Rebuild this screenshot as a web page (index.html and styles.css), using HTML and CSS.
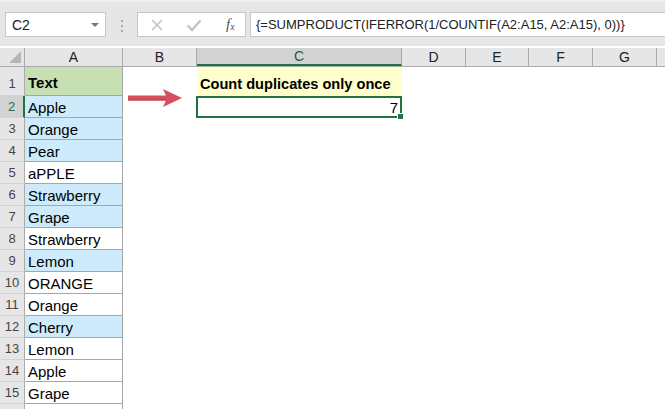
FILE: index.html
```html
<!DOCTYPE html>
<html>
<head>
    <title>Count duplicates only once</title>
    <link rel="stylesheet" href="styles.css">
</head>
<body>
    <div class="toolbar">
        <div class="name-box">
            <span>C2</span>
            <span class="drop"></span>
        </div>
        <div class="grip">
            <i></i><i></i><i></i>
        </div>
        <div class="fx-buttons">
            <svg width="14" height="14" viewBox="0 0 14 14"><path d="M2 2 L12 12 M12 2 L2 12" stroke="#c4c4c4" stroke-width="1.6" fill="none"/></svg>
            <svg width="16" height="14" viewBox="0 0 16 14"><path d="M1.5 7.5 L6 12 L14.5 2.5" stroke="#c4c4c4" stroke-width="2.4" fill="none"/></svg>
            <span class="fx">f<sub>x</sub></span>
        </div>
        <div class="formula">{=SUMPRODUCT(IFERROR(1/COUNTIF(A2:A15, A2:A15), 0))}</div>
    </div>

    <div class="sheet">
        <div class="row head">
            <div class="corner"><span></span></div>
            <div class="col-label">A</div>
            <div class="col-label">B</div>
            <div class="col-label active">C</div>
            <div class="col-label">D</div>
            <div class="col-label">E</div>
            <div class="col-label">F</div>
            <div class="col-label">G</div>
            <div class="col-label last"></div>
        </div>

        <div class="row first">
            <div class="num">1</div>
            <div class="cell green bold">Text</div>
            <div class="arrow-cell">
                <svg width="56" height="20" viewBox="0 0 56 20">
                    <path d="M1 7.5 H40 V12.5 H1 Z" fill="#d4505e"/>
                    <path d="M1 12 H40" stroke="#b13f4b" stroke-width="1.2"/>
                    <path d="M36 1 L55 10 L36 19 L40 10 Z" fill="#d4505e"/>
                </svg>
            </div>
            <div class="cell yellow bold">Count duplicates only once</div>
        </div>

        <div class="row">
            <div class="num active">2</div>
            <div class="cell blue">Apple</div>
            <div class="blank"></div>
            <div class="cell selected">7<span class="handle"></span></div>
        </div>
        <div class="row"><div class="num">3</div><div class="cell blue">Orange</div></div>
        <div class="row"><div class="num">4</div><div class="cell blue">Pear</div></div>
        <div class="row"><div class="num">5</div><div class="cell">aPPLE</div></div>
        <div class="row"><div class="num">6</div><div class="cell blue">Strawberry</div></div>
        <div class="row"><div class="num">7</div><div class="cell blue">Grape</div></div>
        <div class="row"><div class="num">8</div><div class="cell">Strawberry</div></div>
        <div class="row"><div class="num">9</div><div class="cell blue">Lemon</div></div>
        <div class="row"><div class="num">10</div><div class="cell">ORANGE</div></div>
        <div class="row"><div class="num">11</div><div class="cell">Orange</div></div>
        <div class="row"><div class="num">12</div><div class="cell blue">Cherry</div></div>
        <div class="row"><div class="num">13</div><div class="cell">Lemon</div></div>
        <div class="row"><div class="num">14</div><div class="cell">Apple</div></div>
        <div class="row"><div class="num">15</div><div class="cell">Grape</div></div>
        <div class="row"><div class="num"></div><div class="cell"></div></div>
    </div>
</body>
</html>
```

FILE: styles.css
```css
body {
    margin: 0;
    font-family: "Liberation Sans", Arial, sans-serif;
    background: #ffffff;
    overflow: hidden;
}

/* formula bar */
.toolbar {
    height: 46px;
    background: #e6e6e6;
    border-top: 2px solid #f0f0f0;
    box-sizing: border-box;
    display: flex;
    align-items: flex-start;
    padding-top: 10px;
    padding-left: 5px;
}
.name-box {
    width: 101px;
    height: 25px;
    box-sizing: border-box;
    background: #fff;
    border: 1px solid #c6c6c6;
    display: flex;
    align-items: center;
    justify-content: space-between;
    padding: 0 6px 0 6px;
    font-size: 14px;
    color: #222;
}
.drop {
    width: 0;
    height: 0;
    border-left: 4px solid transparent;
    border-right: 4px solid transparent;
    border-top: 4px solid #777;
}
.grip {
    width: 31px;
    display: flex;
    flex-direction: column;
    align-items: center;
    gap: 3px;
    padding-top: 8px;
}
.grip i {
    width: 2px;
    height: 2px;
    background: #a8a8a8;
}
.fx-buttons {
    width: 109px;
    height: 25px;
    box-sizing: border-box;
    background: #fff;
    border: 1px solid #c6c6c6;
    display: flex;
    align-items: center;
    padding-left: 12px;
    gap: 22px;
}
.fx {
    font-family: "Liberation Serif", serif;
    font-style: italic;
    font-size: 15px;
    color: #555;
    margin-left: 2px;
}
.fx sub {
    font-size: 10px;
    vertical-align: -1px;
}
.formula {
    flex: 1;
    height: 25px;
    margin-left: 4px;
    box-sizing: border-box;
    background: #fff;
    border: 1px solid #c6c6c6;
    border-right: none;
    padding-left: 5px;
    font-size: 13px;
    line-height: 23px;
    color: #222;
    white-space: nowrap;
}

/* grid */
.sheet {
    margin-top: 2px;
}
.row {
    display: grid;
    grid-template-columns: 25px 98px 74px 205px 64px 63px 64px 64px 1fr;
    grid-template-rows: minmax(0, 1fr);
    height: 22px;
}
.row.first {
    height: 29px;
}
.row.head {
    height: 19px;
    background: #e6e6e6;
    border-bottom: 1px solid #ababab;
    box-sizing: border-box;
}
.corner {
    border-right: 1px solid #ababab;
    position: relative;
}
.corner span {
    position: absolute;
    right: 3px;
    bottom: 3px;
    width: 0;
    height: 0;
    border-left: 12px solid transparent;
    border-bottom: 12px solid #b6b6b6;
}
.col-label {
    border-right: 1px solid #ababab;
    text-align: center;
    font-size: 14px;
    line-height: 18px;
    color: #222;
}
.col-label.last {
    border-right: none;
}
.col-label.active {
    background: #d2d2d2;
    border-bottom: 2px solid #217346;
    line-height: 17px;
    color: #1e5e3a;
}
.num {
    background: #e6e6e6;
    border-right: 1px solid #ababab;
    border-bottom: 1px solid #d4d4d4;
    text-align: center;
    font-size: 13px;
    color: #444;
    display: flex;
    align-items: flex-end;
    justify-content: center;
    padding-bottom: 3px;
}
.first .num {
    padding-bottom: 4px;
}
.num.active {
    background: #d2d2d2;
    border-right: 2px solid #217346;
    color: #217346;
}
.cell {
    border-right: 1px solid #a6a6a6;
    border-bottom: 1px solid #a6a6a6;
    font-size: 15px;
    color: #000;
    padding: 0 3px 1px 3px;
    display: flex;
    align-items: flex-end;
    white-space: nowrap;
}
.first .cell {
    padding-bottom: 4px;
}
.bold {
    font-weight: bold;
}
.green {
    background: #c6e0b4;
}
.blue {
    background: #cdebfa;
}
.yellow {
    background: #ffffcc;
    border: none;
    font-size: 14.6px;
}
.arrow-cell {
    padding-top: 21px;
    padding-left: 4px;
    overflow: visible;
    min-height: 0;
}
.arrow-cell svg {
    display: block;
}
.selected {
    border: 2px solid #217346;
    justify-content: flex-end;
    position: relative;
    padding: 0 2px 0 0;
    margin-left: -1px;
}
.handle {
    position: absolute;
    right: -4px;
    bottom: -4px;
    width: 5px;
    height: 5px;
    background: #217346;
    border: 1px solid #fff;
}
```
